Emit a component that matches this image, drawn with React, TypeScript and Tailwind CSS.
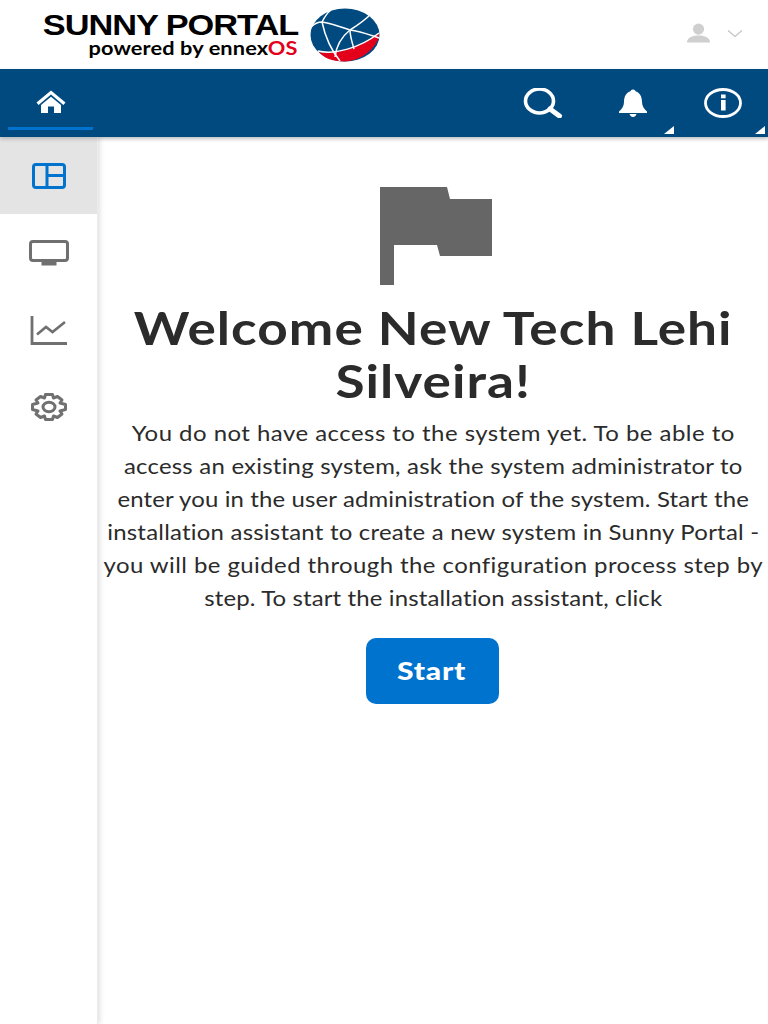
function HomeIcon() {
  return (
    <svg width="30" height="24" viewBox="0 0 30 24" fill="white">
      <path d="M15 0.5 L29.5 12.6 L27.4 15 L15 4.6 L2.6 15 L0.5 12.6 Z" />
      <path d="M15 6.8 L25 15 V23 H18 V16.5 H12 V23 H5 V15 Z" />
    </svg>
  );
}

function Globe() {
  return (
    <svg width="70" height="54" viewBox="0 0 70 54">
      <ellipse cx="35" cy="27" rx="34.5" ry="26.5" fill="#004a80" />
      <path d="M9 44 C28 48 52 38 69 25 C70 36 54 53 34 53.5 C22 53.5 14 50 9 44 Z" fill="#e2001a" />
      <g stroke="white" strokeWidth="1.5" fill="none">
        <path d="M1 19 C5 15 9 14 12 14 C24 16 34 20 40 22 C48 17 56 11 61 6" />
        <path d="M12 14 C14 10 17 5 21 2" />
        <path d="M40 22 C50 23 60 27 69 30" />
        <path d="M12 14 C15 28 21 42 30 53" />
        <path d="M40 22 C30 30 26 40 25 49" />
        <path d="M40 22 C40 28 42 34 44 41" />
        <path d="M8 43 C24 47 50 40 69 25" />
      </g>
    </svg>
  );
}

export default function App() {
  return (
    <div className="w-[768px] h-[1024px] bg-white flex flex-col overflow-hidden font-['Lato',sans-serif]">
      <header className="h-[69px] shrink-0 flex items-center justify-between">
        <div className="flex items-center pl-[43px] gap-[12px]">
          <div className="flex flex-col items-end w-[255px] text-black">
            <div className="origin-right scale-x-[1.144] font-['Liberation_Sans',sans-serif] font-bold text-[30px] leading-[27px] tracking-[-0.9px] whitespace-nowrap">SUNNY PORTAL</div>
            <div className="origin-right scale-x-[1.145] text-[19px] leading-[20px] font-bold tracking-[0.1px] whitespace-nowrap">
              powered by ennex<span className="text-[#e2001a]">OS</span>
            </div>
          </div>
          <Globe />
        </div>
        <div className="flex items-center gap-[16px] pr-[25px] pb-[3px]">
          <svg width="25" height="20" viewBox="0 0 26 20" fill="#cfcfcf">
            <circle cx="13" cy="6" r="5.8" />
            <path d="M1 20 C1 15 6 12.5 13 12.5 C20 12.5 25 15 25 20 Z" />
          </svg>
          <svg width="16" height="9" viewBox="0 0 16 9" fill="none" stroke="#c4c4c4" strokeWidth="1.2">
            <path d="M1 1.5 L8 7.5 L15 1.5" />
          </svg>
        </div>
      </header>

      <nav className="h-[68px] shrink-0 bg-[#004a80] flex items-stretch justify-between relative z-10 shadow-[0_2px_4px_rgba(0,0,0,0.2)]">
        <div className="w-[85px] ml-[8px] flex items-center justify-center border-b-[3px] border-[#0073ce] mb-[7px] pt-[8px]">
          <HomeIcon />
        </div>
        <div className="flex items-center">
          <div className="w-[104px] flex justify-center items-center pr-[6px]">
            <svg width="40" height="30" viewBox="0 0 40 30" fill="none" stroke="white">
              <ellipse cx="16.5" cy="13" rx="14" ry="12" strokeWidth="3.6" />
              <path d="M27 21 L36.5 28" strokeWidth="5" strokeLinecap="round" />
            </svg>
          </div>
          <div className="relative w-[70px] h-[68px] mr-[10px] flex justify-center items-center">
            <svg width="30" height="28" viewBox="0 0 30 28" fill="white">
              <circle cx="15" cy="3" r="2.6" />
              <path d="M15 2 C22 2 24 8 24 13 C24 17 26 20 29 22.5 V24 H1 V22.5 C4 20 6 17 6 13 C6 8 8 2 15 2 Z" />
              <path d="M11.5 25 H18.5 C18 27 16.5 28 15 28 C13.5 28 12 27 11.5 25 Z" />
            </svg>
            <span className="absolute right-[-6px] bottom-[3px] w-0 h-0 border-l-[10px] border-l-transparent border-b-[8px] border-b-white" />
          </div>
          <div className="relative w-[90px] h-[68px] flex justify-center items-center">
            <svg width="38" height="30" viewBox="0 0 38 30" fill="none">
              <ellipse cx="19" cy="15" rx="17.5" ry="13.5" stroke="white" strokeWidth="2.8" />
              <rect x="17" y="12" width="4.6" height="10.5" fill="white" />
              <rect x="17" y="6.5" width="4.6" height="3.8" fill="white" />
            </svg>
            <span className="absolute right-[3px] bottom-[3px] w-0 h-0 border-l-[10px] border-l-transparent border-b-[8px] border-b-white" />
          </div>
        </div>
      </nav>

      <div className="flex-1 flex min-h-0">
        <aside className="w-[98px] shrink-0 bg-white border-r-[1px] border-[#ececec] shadow-[2px_0_5px_rgba(0,0,0,0.12)] flex flex-col">
          <div className="h-[77px] bg-[#e4e4e4] flex items-center justify-center">
            <svg width="34" height="26" viewBox="0 0 34 26" fill="none" stroke="#0073ce" strokeWidth="3">
              <rect x="1.5" y="1.5" width="31" height="23" rx="2.5" />
              <path d="M15 1.5 V24.5 M15 12.5 H32" />
            </svg>
          </div>
          <div className="h-[77px] flex items-center justify-center">
            <svg width="40" height="26" viewBox="0 0 40 26" fill="none">
              <rect x="1.5" y="1.5" width="37" height="19" rx="2.5" stroke="#707070" strokeWidth="3" />
              <rect x="12.5" y="21" width="15" height="4.5" fill="#707070" />
            </svg>
          </div>
          <div className="h-[77px] flex items-center justify-center">
            <svg width="38" height="30" viewBox="0 0 38 30" fill="none" stroke="#707070">
              <path d="M2 1 V28.5 H37" strokeWidth="2.8" />
              <path d="M7 19.5 L16 12 L22.5 17 L35 7" strokeWidth="2.6" />
            </svg>
          </div>
          <div className="h-[77px] flex items-center justify-center">
            <svg width="36" height="28" viewBox="0 0 36 28" fill="none" stroke="#707070">
              <ellipse cx="18" cy="14" rx="6" ry="4.8" strokeWidth="3" />
              <path strokeWidth="3" strokeLinejoin="round" d="M14.5 1.5 H21.5 L22.5 5 L26.5 3.5 L31 7 L29 10 L34.5 11.5 V16.5 L29 18 L31 21 L26.5 24.5 L22.5 23 L21.5 26.5 H14.5 L13.5 23 L9.5 24.5 L5 21 L7 18 L1.5 16.5 V11.5 L7 10 L5 7 L9.5 3.5 L13.5 5 Z" />
            </svg>
          </div>
        </aside>
        <main className="flex-1 min-w-0 flex flex-col items-center pt-[50px] shadow-[inset_0_4px_4px_-3px_rgba(0,0,0,0.1)] text-[#2b2b2b]">
          <svg width="112" height="98" viewBox="0 0 112 98" fill="#666666" className="ml-[5px] shrink-0">
            <path d="M0 0 H67 L70 12 H112 V69 H60 L57 58 H14 V98 H0 Z" />
          </svg>
          <h1 className="mt-[16px] scale-x-[1.155] whitespace-nowrap text-center text-[46px] leading-[53px] font-bold tracking-[0.9px]">
            Welcome New Tech Lehi<br />Silveira!
          </h1>
          <p className="mt-[9px] scale-x-[1.14] whitespace-nowrap text-center text-[21px] leading-[33px]">
            <span className="block tracking-[0.42px]">You do not have access to the system yet. To be able to</span>
            <span className="block tracking-[0.2px]">access an existing system, ask the system administrator to</span>
            <span className="block tracking-[0.12px]">enter you in the user administration of the system. Start the</span>
            <span className="block tracking-[0.2px]">installation assistant to create a new system in Sunny Portal -</span>
            <span className="block tracking-[0.38px]">you will be guided through the configuration process step by</span>
            <span className="block tracking-[0.12px]">step. To start the installation assistant, click</span>
          </p>
          <button className="mt-[24px] mr-[2px] w-[133px] h-[66px] rounded-[10px] bg-[#0073ce] text-white text-[24px] font-black tracking-[0.6px]">
            <span className="inline-block scale-x-[1.25]">Start</span>
          </button>
        </main>
      </div>
    </div>
  );
}
